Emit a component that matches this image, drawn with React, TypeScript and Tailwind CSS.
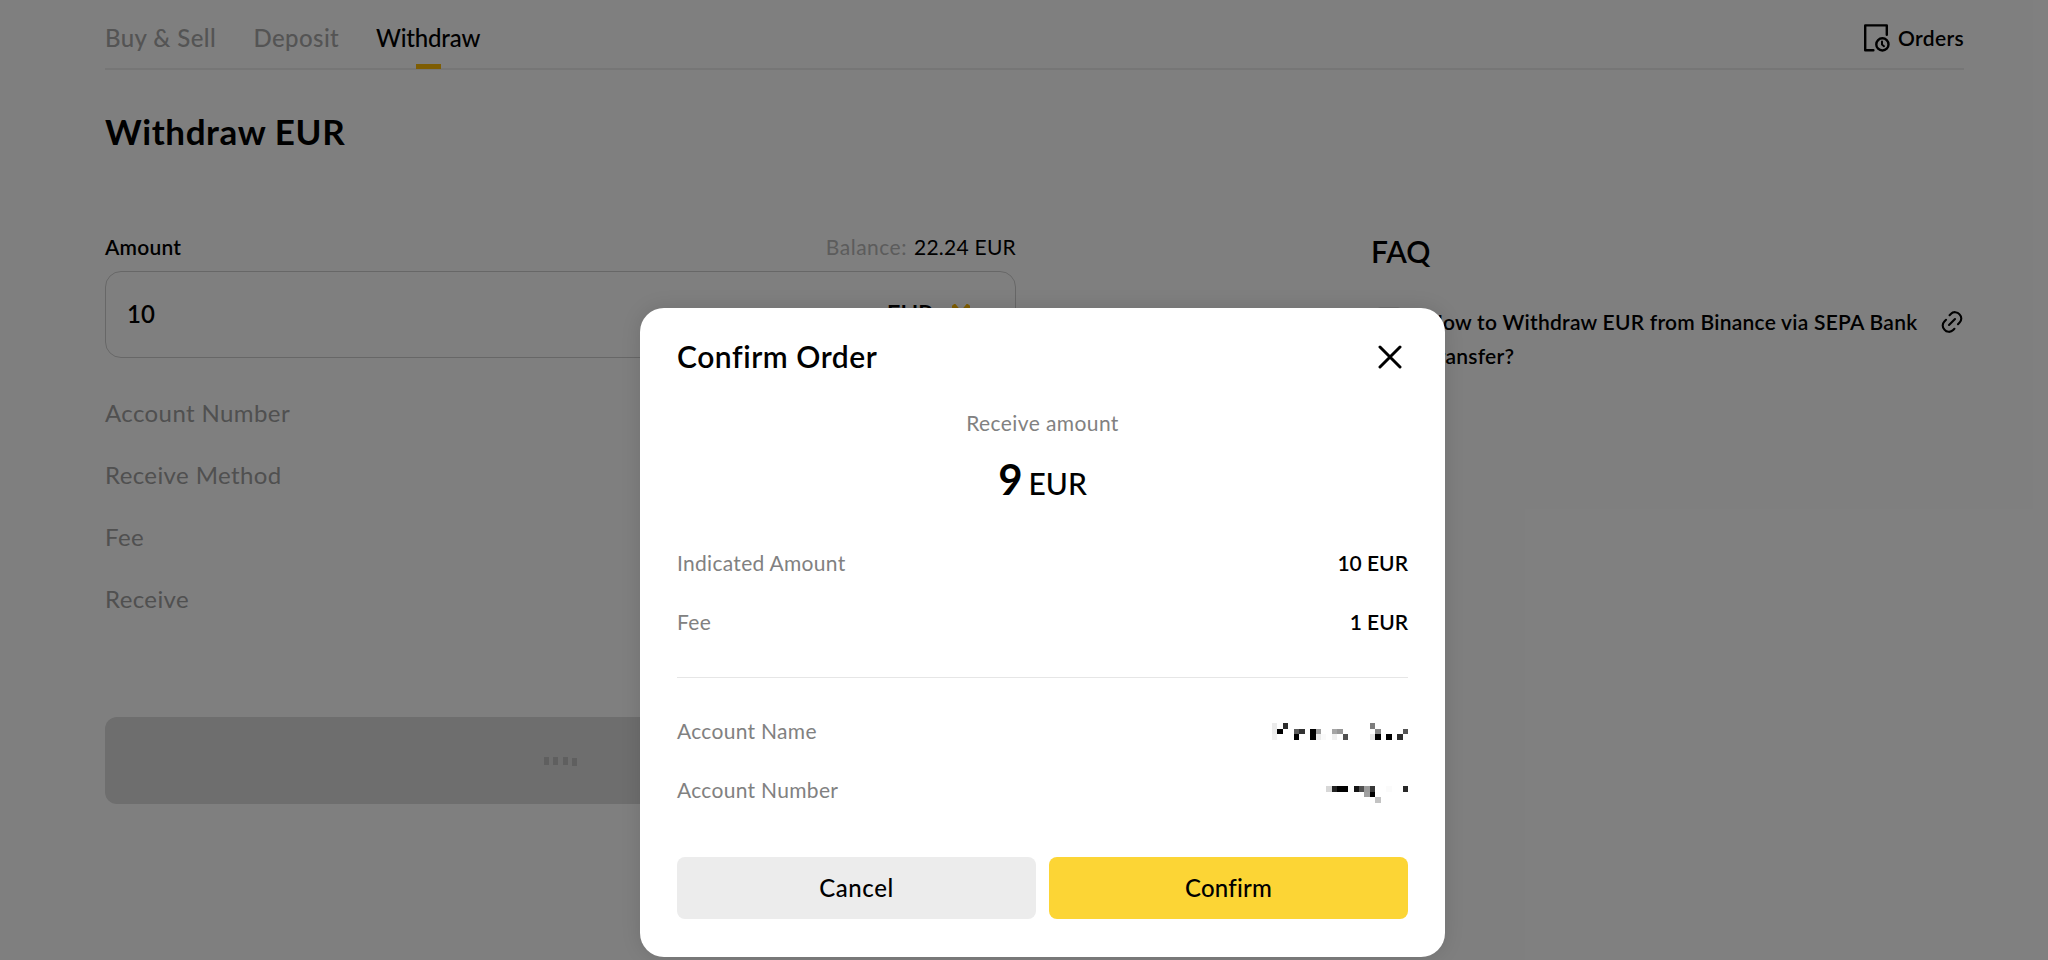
import type { ReactNode } from 'react';

type Cell = [x: number, y: number, grey: number];

const tabs = [
  { label: 'Buy & Sell', className: 'w-[148.5px] tracking-[0.4px] text-[#a9a9a9]' },
  { label: 'Deposit', className: 'w-[122.5px] tracking-[0.4px] text-[#a9a9a9]' },
];

const summary = ['Account Number', 'Receive Method', 'Fee', 'Receive'];

const accountName: Cell[] = [
  [0, 0, 235], [2, 0, 45], [18, 0, 125],
  [0, 1, 235], [1, 1, 0], [4, 1, 90], [5, 1, 50], [7, 1, 0], [8, 1, 160], [11, 1, 165], [12, 1, 150], [19, 1, 135], [24, 1, 85],
  [0, 2, 240], [4, 2, 0], [7, 2, 0], [8, 2, 235], [9, 2, 250], [11, 2, 240], [13, 2, 80], [18, 2, 232], [19, 2, 0], [21, 2, 0], [23, 2, 45],
];

const accountNumber: Cell[] = [
  [10, 0, 215], [11, 0, 35], [12, 0, 0], [13, 0, 0], [15, 0, 20], [16, 0, 80], [17, 0, 155], [18, 0, 55], [21, 0, 251], [24, 0, 40],
  [17, 1, 160], [18, 1, 0],
  [19, 2, 195],
];

// Censored value, drawn as a mosaic
function Mosaic({ cells, className }: { cells: Cell[]; className?: string }) {
  return (
    <svg width="136" height="17" viewBox="0 0 25 3" preserveAspectRatio="none" className={className} shapeRendering="crispEdges">
      {cells.map(([x, y, g]) => (
        <rect key={`${x}-${y}`} x={x} y={y} width="1" height="1" fill={`rgb(${g},${g},${g})`} />
      ))}
    </svg>
  );
}

function OrdersIcon() {
  return (
    <svg width="28" height="30" viewBox="0 0 28 30" fill="none" stroke="currentColor" strokeWidth="2.4" strokeLinecap="round" strokeLinejoin="round">
      <path d="M10.4 27.3H2.2V2.4H23.8V11.8" />
      <circle cx="19.4" cy="21.4" r="6.1" />
      <path d="M19 18.4V21.4L21 23.2" strokeWidth="2" />
    </svg>
  );
}

function LinkIcon() {
  return (
    <svg width="22" height="22" viewBox="0 0 22 22" fill="none" stroke="currentColor" strokeWidth="2.1" strokeLinecap="round">
      <path d="M8.6 4.2 9.8 3A5.8 5.8 0 0 1 18.6 3.4 5.8 5.8 0 0 1 18.6 11.6L17 13.2" />
      <path d="M13.4 17.8 12.2 19A5.8 5.8 0 0 1 3.4 18.6 5.8 5.8 0 0 1 3.4 10.4L5 8.8" />
      <path d="M8 14 14 8" />
    </svg>
  );
}

function DetailRow({ label, children }: { label: string; children: ReactNode }) {
  return (
    <div className="flex h-[59px] items-center justify-between text-[21px]">
      <span className="tracking-[0.3px] text-[#818181]">{label}</span>
      {children}
    </div>
  );
}

function ConfirmDialog() {
  return (
    <div className="absolute left-[640px] top-[307.5px] h-[649px] w-[805px] rounded-3xl bg-white px-[37px] pt-[30px] shadow-[0_0_20px_rgba(0,0,0,0.12)]">
      <div className="flex h-9 items-center justify-between">
        <h2 className="text-[30px] font-semibold leading-9 tracking-[0.55px]">Confirm Order</h2>
        <svg width="24" height="24" viewBox="0 0 24 24" fill="none" stroke="currentColor" strokeWidth="3" strokeLinecap="round" className="mr-[6.5px] mt-[3px]">
          <path d="M2 2 22 22M22 2 2 22" />
        </svg>
      </div>
      <p className="mt-[34.5px] text-center text-[21px] leading-[30px] tracking-[0.4px] text-[#818181]">Receive amount</p>
      <div className="mt-[16px] flex h-[50px] items-baseline justify-center gap-1.5">
        <span className="text-[42px] font-bold leading-[50px]">9</span>
        <span className="text-[30px] font-medium leading-9">EUR</span>
      </div>
      <div className="mt-[29px] border-b border-[#e6e6e6] pb-[25.5px]">
        <DetailRow label="Indicated Amount"><span className="font-semibold">10 EUR</span></DetailRow>
        <DetailRow label="Fee"><span className="font-semibold">1 EUR</span></DetailRow>
      </div>
      <div className="mt-6">
        <DetailRow label="Account Name"><Mosaic cells={accountName} /></DetailRow>
        <DetailRow label="Account Number"><Mosaic cells={accountNumber} className="mt-[8px]" /></DetailRow>
      </div>
      <div className="mt-[37.5px] grid h-[62px] grid-cols-2 gap-[13px] text-[24px] font-medium">
        <button className="rounded-lg bg-[#ececec] tracking-[0.6px]">Cancel</button>
        <button className="rounded-lg bg-[#fcd535] tracking-[0.2px]">Confirm</button>
      </div>
    </div>
  );
}

export default function App() {
  return (
    <div className="relative h-[960px] w-[2048px] overflow-hidden bg-white font-['Lato',sans-serif] text-black">
      <div className="pl-[105px] pr-[84px]">
        <header className="flex h-[70px] items-center justify-between border-b-2 border-[#ededed] pt-2 text-[24px]">
          <nav className="flex font-medium">
            {tabs.map((tab) => (
              <span key={tab.label} className={tab.className}>{tab.label}</span>
            ))}
            <span className="relative tracking-[-0.2px]">
              Withdraw
              <i className="absolute left-[40px] top-[44px] h-[5px] w-[25px] bg-[#fcba06]" />
            </span>
          </nav>
          <div className="flex items-center gap-[7px] text-[21px] font-semibold tracking-[0.35px]">
            <OrdersIcon />
            <span>Orders</span>
          </div>
        </header>
        <h1 className="mt-[39px] text-[35px] font-bold leading-[44px] tracking-[0.6px]">Withdraw EUR</h1>
        <div className="mt-[78px] flex items-start justify-between">
          <main className="w-[911px]">
            <div className="flex items-center justify-between text-[21px] leading-8">
              <span className="font-semibold tracking-[0.2px]">Amount</span>
              <div className="flex gap-[7px]">
                <span className="tracking-[0.5px] text-[#b8b8b8]">Balance:</span>
                <span className="tracking-[0.25px]">22.24 EUR</span>
              </div>
            </div>
            <div className="mt-2 flex h-[87px] items-center justify-between rounded-2xl border-[1.5px] border-[#cfcfcf] pb-0.5 pl-[21px] pr-[45px] text-[24px] font-semibold">
              <span>10</span>
              <div className="flex items-center gap-[19px]">
                <span className="tracking-[-0.2px]">EUR</span>
                <svg width="18" height="19" viewBox="0 0 18 19" fill="none" stroke="#fcba06" strokeWidth="5">
                  <path d="M1 1 9 10.5 17 1" />
                </svg>
              </div>
            </div>
            <ul className="mt-[24px] text-[24px] tracking-[0.4px] text-[#a0a0a0]">
              {summary.map((item) => (
                <li key={item} className="flex h-[62px] items-center">{item}</li>
              ))}
            </ul>
            <button className="mt-[87px] flex h-[87px] w-full items-center justify-center gap-[4.5px] rounded-xl bg-[#dcdcdc]">
              <i className="h-2 w-[5px] bg-[#bfbfbf]" />
              <i className="h-2 w-[5px] bg-[#bfbfbf]" />
              <i className="h-2 w-[5px] bg-[#bfbfbf]" />
              <i className="mt-0.5 h-2 w-[5px] bg-[#bfbfbf]" />
            </button>
          </main>
          <aside className="w-[593px] pt-1">
            <h2 className="text-[30px] font-semibold leading-8">FAQ</h2>
            <div className="mt-[37.5px] flex text-[21px] font-semibold leading-[34px]">
              <i className="ml-[6px] mt-0.5 h-7 w-6 rounded bg-[#e4e4e4]" />
              <p className="ml-[26px] w-[500px] tracking-[0.25px]">How to Withdraw EUR from Binance via SEPA Bank Transfer?</p>
              <div className="ml-auto mr-px mt-[6px]"><LinkIcon /></div>
            </div>
          </aside>
        </div>
      </div>
      <div className="absolute inset-0 bg-black/50" />
      <ConfirmDialog />
    </div>
  );
}
